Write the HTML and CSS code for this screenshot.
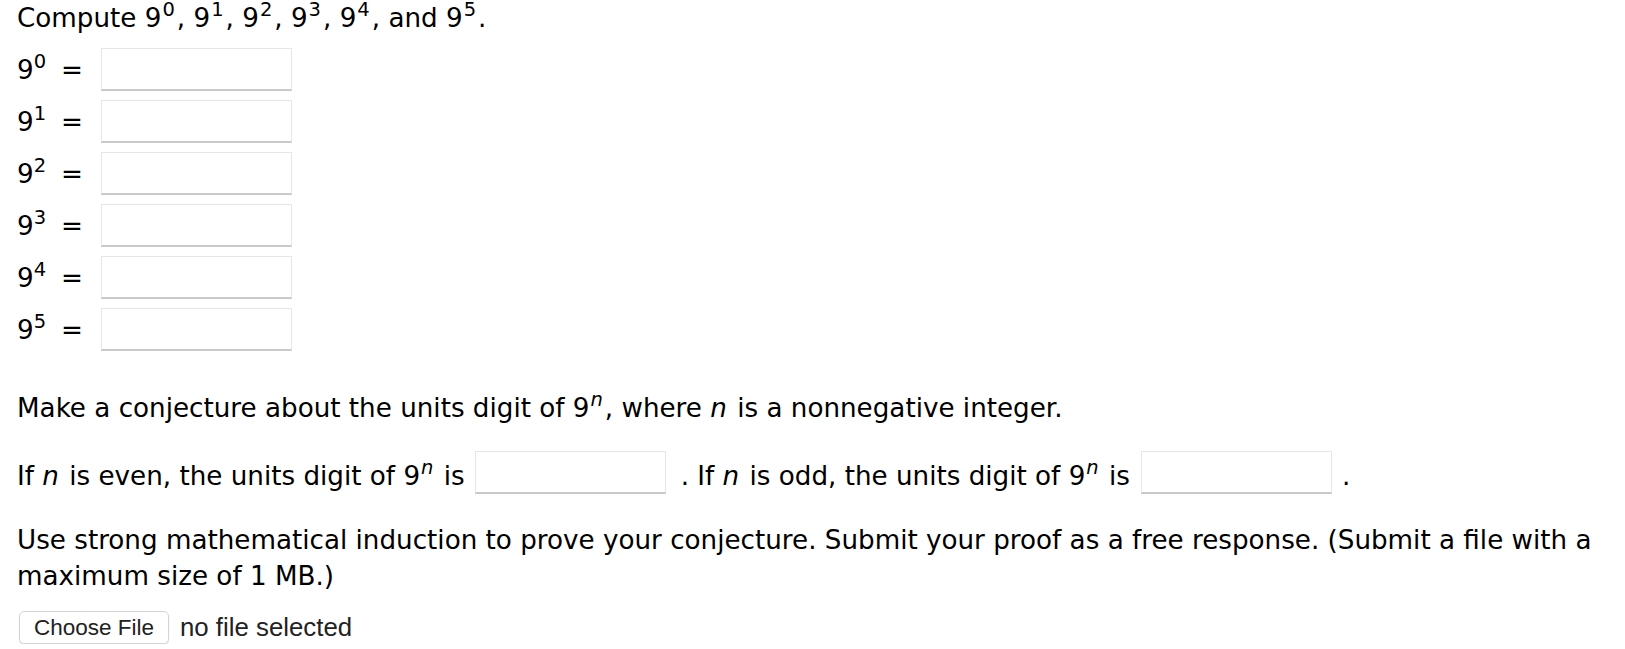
FILE: index.html
```html
<!DOCTYPE html>
<html>
<head>
<meta charset="utf-8">
<link rel="stylesheet" href="styles.css">
</head>
<body>
<div class="page">
  <p class="intro">Compute 9<sup>0</sup>, 9<sup>1</sup>, 9<sup>2</sup>, 9<sup>3</sup>, 9<sup>4</sup>, and 9<sup>5</sup>.</p>
  <div class="powers">
    <div class="row"><span class="lab">9<sup>0</sup></span><span class="eq">=</span><span class="box"></span></div>
    <div class="row"><span class="lab">9<sup>1</sup></span><span class="eq">=</span><span class="box"></span></div>
    <div class="row"><span class="lab">9<sup>2</sup></span><span class="eq">=</span><span class="box"></span></div>
    <div class="row"><span class="lab">9<sup>3</sup></span><span class="eq">=</span><span class="box"></span></div>
    <div class="row"><span class="lab">9<sup>4</sup></span><span class="eq">=</span><span class="box"></span></div>
    <div class="row"><span class="lab">9<sup>5</sup></span><span class="eq">=</span><span class="box"></span></div>
  </div>
  <p class="conj">Make a conjecture about the units digit of 9<sup><i>n</i></sup>, where <i class="mi">n</i> is a nonnegative integer.</p>
  <div class="fill">
    <span class="txt">If <i class="mi">n</i> is even, the units digit of 9<sup><i>n</i></sup> is</span><span class="box wide"></span><span class="txt dot">. If <i class="mi">n</i> is odd, the units digit of 9<sup><i>n</i></sup> is</span><span class="box wide"></span><span class="txt dot last">.</span>
  </div>
  <p class="proof">Use strong mathematical induction to prove your conjecture. Submit your proof as a free response. (Submit a file with a maximum size of 1 MB.)</p>
  <div class="file"><span class="btn">Choose File</span><span class="nofile">no file selected</span></div>
</div>
</body>
</html>
```
FILE: styles.css
```css
html, body { margin: 0; padding: 0; background: #fff; }
.page {
  font-family: "DejaVu Sans", Verdana, sans-serif;
  font-size: 26.2px;
  color: #000;
  padding: 0 17px;
}
sup { font-size: 19.5px; line-height: 0; vertical-align: 11px; margin: 0 2px 0 1px; }
.lab sup { margin: 0; }
.mi { padding-right: 2px; }
p { margin: 0; }
.intro { padding-top: 3px; line-height: 30px; }
.powers { margin-top: 15px; display: flex; flex-direction: column; gap: 9px; }
.row { display: flex; align-items: center; height: 43px; }
.lab { width: 44px; }
.eq { width: 40px; }
.box {
  display: inline-block;
  box-sizing: border-box;
  width: 191px;
  height: 43px;
  border: 1px solid #e6e6e6;
  border-bottom: 2px solid #c9c9c9;
  background: #fff;
}
.conj { margin-top: 42px; line-height: 30px; }
.fill { margin-top: 28px; display: flex; align-items: center; height: 43px; }
.fill .txt { padding-top: 6px; }
.fill .box.wide { height: 43px; margin-left: 10px; }
.dot { margin-left: 15px; }
.dot.last { margin-left: 10px; }
.dot + .box.wide { margin-left: 11px; }
.proof { margin-top: 28px; line-height: 36px; }
.file { margin-top: 17px; display: flex; align-items: center; font-family: "Liberation Sans", Arial, sans-serif; }
.btn {
  box-sizing: border-box;
  margin-left: 2px;
  width: 150px; height: 33px;
  border: 1px solid #d4d4d4;
  border-radius: 5px;
  box-shadow: 0 1px 1px rgba(0,0,0,0.12);
  display: flex; align-items: center; justify-content: center;
  color: #222;
  font-size: 22.5px;
}
.nofile { margin-left: 11px; color: #222; font-size: 25.8px; }
```
